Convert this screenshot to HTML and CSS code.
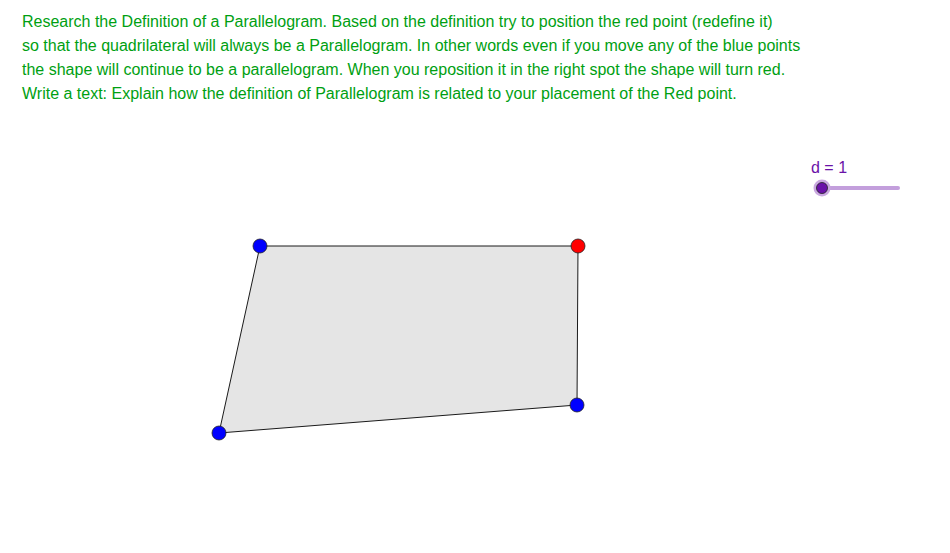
FILE: index.html
```html
<!DOCTYPE html>
<html>
<head>
<meta charset="utf-8">
<link rel="stylesheet" href="styles.css">
</head>
<body>
<div class="app">
  <div class="prompt">
    <div>Research the Definition of a Parallelogram. Based on the definition try to position the red point (redefine it)</div>
    <div>so that the quadrilateral will always be a Parallelogram. In other words even if you move any of the blue points</div>
    <div>the shape will continue to be a parallelogram. When you reposition it in the right spot the shape will turn red.</div>
    <div>Write a text: Explain how the definition of Parallelogram is related to your placement of the Red point.</div>
  </div>
  <svg class="canvas" width="950" height="553" viewBox="0 0 950 553">
    <polygon points="260,246 578,246 577,405 219,433" fill="#e5e5e5" stroke="#1a1a1a" stroke-width="1"/>
    <circle cx="260" cy="246" r="7" fill="#0000ff" stroke="#222" stroke-width="0.8"/>
    <circle cx="578" cy="246" r="7" fill="#ff0000" stroke="#222" stroke-width="0.8"/>
    <circle cx="577" cy="405" r="7" fill="#0000ff" stroke="#222" stroke-width="0.8"/>
    <circle cx="219" cy="433" r="7" fill="#0000ff" stroke="#222" stroke-width="0.8"/>
    <line x1="822" y1="188" x2="898" y2="188" stroke="#c39fdc" stroke-width="4" stroke-linecap="round"/>
    <circle cx="822" cy="188" r="8.5" fill="#c9a8e0"/>
    <circle cx="822" cy="188" r="5.5" fill="#6a12a8" stroke="#222" stroke-width="0.8"/>
    <text x="811" y="173" class="label">d = 1</text>
  </svg>
</div>
</body>
</html>
```
FILE: styles.css
```css
html, body {
  margin: 0;
  padding: 0;
  background: #ffffff;
}
.app {
  position: relative;
  width: 950px;
  height: 553px;
  overflow: hidden;
}
.prompt {
  position: relative;
  z-index: 1;
  padding: 10px 0 0 22px;
  font-family: "Liberation Sans", Arial, sans-serif;
  font-size: 16px;
  line-height: 24px;
  color: #009f12;
  white-space: nowrap;
}
.canvas {
  position: absolute;
  left: 0;
  top: 0;
}
.label {
  font-family: "Liberation Sans", Arial, sans-serif;
  font-size: 16px;
  fill: #6a12a8;
}
```
